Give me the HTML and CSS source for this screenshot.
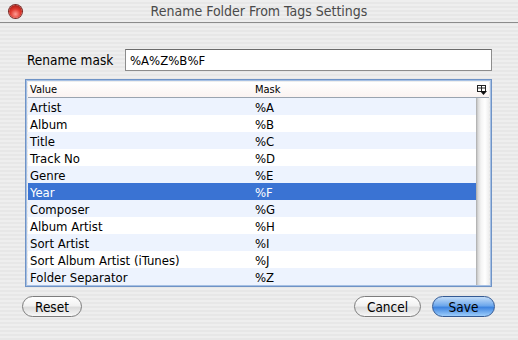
FILE: index.html
```html
<html>
    <head>
        <link rel="stylesheet" href="styles.css">
    </head>
    <body>
        <div class="window">
            <div class="titlebar">
                <span class="close"></span>
                <span class="title">Rename Folder From Tags Settings</span>
            </div>

            <div class="content">
                <div class="mask-row">
                    <label for="mask">Rename mask</label>
                    <input type="text" id="mask" value="%A%Z%B%F" />
                </div>

                <div class="table-box">
                    <div class="table-head">
                        <span class="col-value">Value</span>
                        <span class="col-mask">Mask</span>
                        <span class="corner">
                            <svg width="10" height="10" viewBox="0 0 10 10">
                                <rect x="0.5" y="0.5" width="8" height="6" fill="#fff" stroke="#222" />
                                <line x1="0.5" y1="3" x2="8.5" y2="3" stroke="#222" />
                                <line x1="4.5" y1="0.5" x2="4.5" y2="6.5" stroke="#222" />
                                <polygon points="3,6 10,6 6.5,10" fill="#111" />
                            </svg>
                        </span>
                    </div>
                    <div class="table-body">
                        <div class="rows">
                            <div class="row"><span class="col-value">Artist</span><span class="col-mask">%A</span></div>
                            <div class="row"><span class="col-value">Album</span><span class="col-mask">%B</span></div>
                            <div class="row"><span class="col-value">Title</span><span class="col-mask">%C</span></div>
                            <div class="row"><span class="col-value">Track No</span><span class="col-mask">%D</span></div>
                            <div class="row"><span class="col-value">Genre</span><span class="col-mask">%E</span></div>
                            <div class="row selected"><span class="col-value">Year</span><span class="col-mask">%F</span></div>
                            <div class="row"><span class="col-value">Composer</span><span class="col-mask">%G</span></div>
                            <div class="row"><span class="col-value">Album Artist</span><span class="col-mask">%H</span></div>
                            <div class="row"><span class="col-value">Sort Artist</span><span class="col-mask">%I</span></div>
                            <div class="row"><span class="col-value">Sort Album Artist (iTunes)</span><span class="col-mask">%J</span></div>
                            <div class="row"><span class="col-value">Folder Separator</span><span class="col-mask">%Z</span></div>
                        </div>
                        <div class="scrolltrack"></div>
                    </div>
                </div>

                <div class="buttons">
                    <button class="btn btn-reset">Reset</button>
                    <span class="spacer"></span>
                    <button class="btn btn-cancel">Cancel</button>
                    <button class="btn btn-save">Save</button>
                </div>
            </div>
        </div>
    </body>
</html>
```

FILE: styles.css
```css
body {
    margin: 0;
    font-family: "DejaVu Sans Condensed", "DejaVu Sans", sans-serif;
    font-size: 13px;
    color: #000;
}
.window {
    width: 518px;
    height: 340px;
    overflow: hidden;
    background: repeating-linear-gradient(#eeeeee 0, #eeeeee 2px, #e7e7e7 2px, #e7e7e7 4px);
}
.titlebar {
    height: 22px;
    border-bottom: 1px solid #8c8c8c;
    display: flex;
    align-items: center;
}
.close {
    width: 13px;
    height: 13px;
    margin-left: 9px;
    border-radius: 50%;
    background: radial-gradient(circle at 50% 70%, #ff9c94 0, #e0392e 45%, #8e0d08 100%);
    box-shadow: 0 0 0 1px #7a2a25;
}
.title {
    flex: 1;
    text-align: center;
    margin-right: 22px;
    font-size: 14px;
    color: #4a4a4a;
}
.content {
    padding: 26px 26px 0 25px;
}
.mask-row {
    display: flex;
    align-items: center;
    height: 22px;
}
.mask-row label {
    width: 98px;
    padding-left: 2px;
    font-size: 13.5px;
}
.mask-row input {
    width: 367px;
    height: 22px;
    box-sizing: border-box;
    border: 1px solid #8d8d8d;
    border-top-color: #6c6c6c;
    background: #fff;
    font-family: inherit;
    font-size: 13px;
    padding: 0 4px;
    outline: none;
}
.table-box {
    margin-top: 8px;
    width: 467px;
    height: 208px;
    box-sizing: border-box;
    border: 1px solid #6f93c6;
    box-shadow: inset 0 0 0 1px #a6c0e4;
    padding: 2px;
}
.table-head {
    display: flex;
    height: 15px;
    border-bottom: 1px solid #9aa4b0;
    background: linear-gradient(#ffffff, #fbf3f1);
    align-items: center;
    font-size: 11px;
}
.col-value {
    width: 225px;
    padding-left: 2px;
}
.col-mask {
    flex: 1;
}
.corner {
    width: 15px;
    display: flex;
    justify-content: center;
}
.table-body {
    display: flex;
    background: #fff;
}
.rows {
    width: 448px;
}
.row {
    display: flex;
    height: 17px;
    align-items: center;
    padding-top: 1px;
    box-sizing: border-box;
}
.row:nth-child(odd) {
    background: #edf3fe;
}
.row.selected {
    background: #3a73d3;
    color: #fff;
}
.scrolltrack {
    flex: 1;
    background: linear-gradient(to right, #a9a9a9 0, #d8d8d8 2px, #f4f4f4 5px, #ffffff 9px, #eeeeee 100%);
}
.buttons {
    display: flex;
    margin-top: 9px;
    margin-left: -3px;
    width: 473px;
}
.spacer {
    flex: 1;
}
.btn {
    height: 21px;
    border-radius: 11px;
    border: 1px solid #7d7d7d;
    background: linear-gradient(#ffffff 0, #f2f2f2 45%, #dcdcdc 55%, #f7f7f7 100%);
    font-family: inherit;
    font-size: 13.5px;
    padding: 0;
    color: #000;
}
.btn-reset {
    width: 60px;
}
.btn-cancel {
    width: 67px;
    margin-right: 11px;
}
.btn-save {
    width: 63px;
    border-color: #345a94;
    background: linear-gradient(#c4ddf8 0, #6ea8ec 45%, #3f85e0 55%, #9dcdfb 100%);
}
```
